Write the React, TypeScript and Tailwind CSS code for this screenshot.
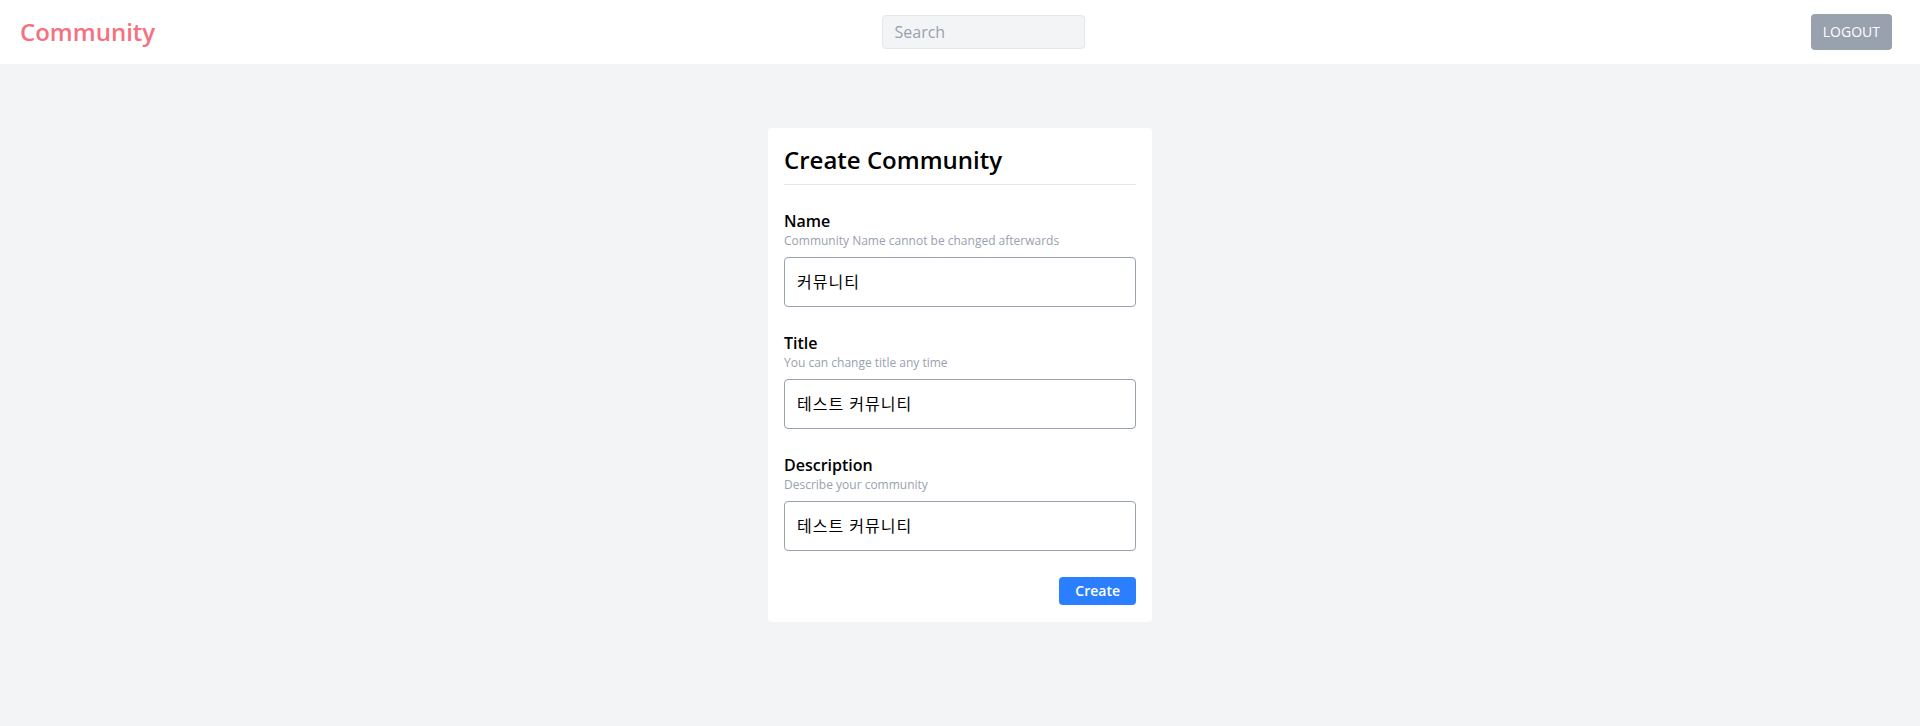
import React from "react";

const font = {
  fontFamily: '"Open Sans", "Noto Sans CJK KR", sans-serif',
};

function Field({ label, help, value }: { label: string; help: string; value: string }) {
  return (
    <div className="mb-6">
      <p className="text-base font-semibold leading-6 text-black">{label}</p>
      <p className="text-xs leading-4 text-gray-400">{help}</p>
      <input
        defaultValue={value}
        className="mt-2 block w-full rounded border border-gray-400 p-3 text-base font-normal leading-6 tracking-[1px] text-black outline-none"
      />
    </div>
  );
}

export default function App() {
  return (
    <div className="min-h-screen bg-gray-100" style={font}>
      <header className="flex h-16 items-center justify-between bg-white pl-5 pr-7">
        <span className="text-2xl font-semibold text-[#f7707f]">Community</span>
        <input
          placeholder="Search"
          className="w-[203px] rounded border border-gray-200 bg-gray-100 px-3 py-1 text-base leading-6 outline-none placeholder:text-gray-400"
        />
        <button className="rounded bg-gray-400 px-3 py-2 text-sm leading-5 text-white">LOGOUT</button>
      </header>
      <main className="pt-16">
        <div className="mx-auto w-96 rounded bg-white px-4 pb-[17px] pt-4">
          <h1 className="mb-6 border-b border-gray-200 pb-2 text-2xl font-semibold leading-8 text-black">
            Create Community
          </h1>
          <Field label="Name" help="Community Name cannot be changed afterwards" value="커뮤니티" />
          <Field label="Title" help="You can change title any time" value="테스트 커뮤니티" />
          <Field label="Description" help="Describe your community" value="테스트 커뮤니티" />
          <div className="-mt-4 flex justify-end pt-[18px]">
            <button className="rounded bg-blue-500 px-4 py-1 text-sm font-semibold leading-5 text-white">Create</button>
          </div>
        </div>
      </main>
    </div>
  );
}
